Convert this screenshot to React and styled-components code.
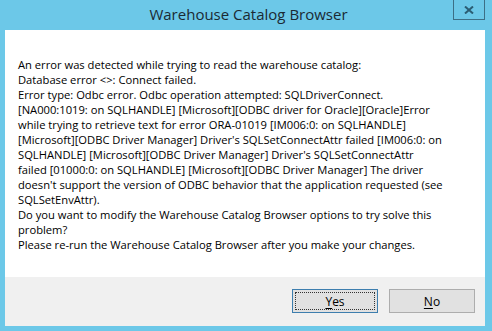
import React from 'react'
import styled, { createGlobalStyle } from 'styled-components'

const GlobalStyle = createGlobalStyle`
  html, body {
    margin: 0;
    padding: 0;
    background: #6cc8e8;
  }
`

const Window = styled.div`
  width: 492px;
  height: 331px;
  box-sizing: border-box;
  background: #6cc8e8;
  display: flex;
  flex-direction: column;
  padding: 0 7px 5px 5px;
  font-family: "Open Sans", "Noto Sans", sans-serif;
`

const TitleBar = styled.div`
  height: 30px;
  flex: none;
  display: flex;
  align-items: flex-start;
  position: relative;
`

const Title = styled.div`
  flex: 1;
  text-align: center;
  font-size: 15px;
  line-height: 28px;
  color: #1b2a33;
  padding-left: 7px;
`

const CloseButton = styled.div`
  position: absolute;
  top: 0;
  right: 0;
  width: 32px;
  height: 20px;
  box-sizing: border-box;
  border: 1px solid #3c6f86;
  border-top: none;
  display: flex;
  align-items: center;
  justify-content: center;
`

const Client = styled.div`
  flex: 1;
  display: flex;
  flex-direction: column;
  background: #ffffff;
`

const Message = styled.div`
  flex: 1;
  padding: 27px 0 0 13px;
  font-size: 11.2px;
  line-height: 15px;
  color: #000;
  white-space: nowrap;
`

const Footer = styled.div`
  height: 49px;
  flex: none;
  background: #f0f0f0;
  display: flex;
  align-items: center;
  justify-content: flex-end;
  gap: 11px;
  padding: 0 10px 1px 0;
  box-sizing: border-box;
`

const Button = styled.div`
  width: 86px;
  height: 24px;
  box-sizing: border-box;
  border: 1px solid ${p => (p.$default ? '#3d7eae' : '#adadad')};
  background: #e1e1e1;
  display: flex;
  align-items: center;
  justify-content: center;
  font-size: 12px;
  color: #000;
  position: relative;
`

const Focus = styled.div`
  position: absolute;
  inset: 2px;
  border: 1px dotted #333;
`

const Key = styled.span`
  text-decoration: underline;
  text-underline-offset: 2px;
`

const lines = [
  'An error was detected while trying to read the warehouse catalog:',
  'Database error <>: Connect failed.',
  'Error type: Odbc error. Odbc operation attempted: SQLDriverConnect.',
  '[NA000:1019: on SQLHANDLE] [Microsoft][ODBC driver for Oracle][Oracle]Error',
  'while trying to retrieve text for error ORA-01019 [IM006:0: on SQLHANDLE]',
  "[Microsoft][ODBC Driver Manager] Driver's SQLSetConnectAttr failed [IM006:0: on",
  "SQLHANDLE] [Microsoft][ODBC Driver Manager] Driver's SQLSetConnectAttr",
  'failed [01000:0: on SQLHANDLE] [Microsoft][ODBC Driver Manager] The driver',
  "doesn't support the version of ODBC behavior that the application requested (see",
  'SQLSetEnvAttr).',
  'Do you want to modify the Warehouse Catalog Browser options to try solve this',
  'problem?',
  'Please re-run the Warehouse Catalog Browser after you make your changes.',
]

const App = () => (
  <>
    <GlobalStyle />
    <Window>
      <TitleBar>
        <Title>Warehouse Catalog Browser</Title>
        <CloseButton>
          <svg width="10" height="8" viewBox="0 0 10 8">
            <path d="M1 0.5 L9 7.5 M9 0.5 L1 7.5" stroke="#2b5d73" strokeWidth="2" />
          </svg>
        </CloseButton>
      </TitleBar>
      <Client>
        <Message>
          {lines.map((l, i) => (
            <div key={i}>{l}</div>
          ))}
        </Message>
        <Footer>
          <Button $default>
            <Focus />
            <span><Key>Y</Key>es</span>
          </Button>
          <Button>
            <span><Key>N</Key>o</span>
          </Button>
        </Footer>
      </Client>
    </Window>
  </>
)

export default App
